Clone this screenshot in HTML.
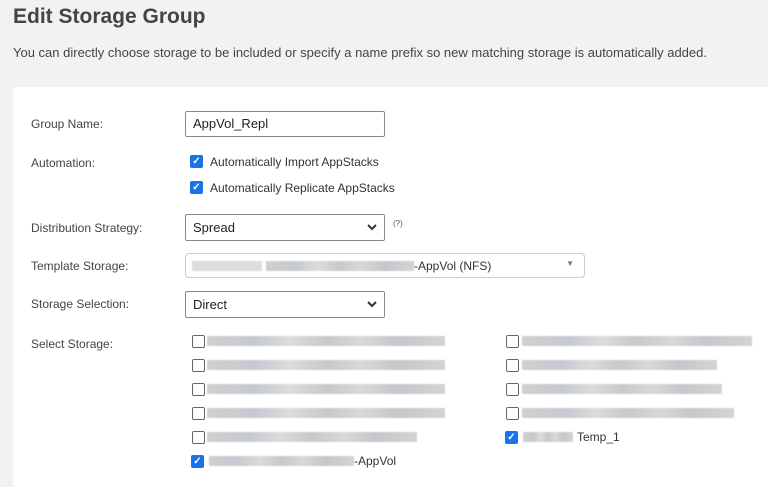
<!DOCTYPE html>
<html><head><style>
body{margin:0;width:768px;height:473px;background:#f2f2f2;font-family:"Liberation Sans",sans-serif;color:#333;overflow:hidden;position:relative}
.a{position:absolute}
h1{position:absolute;left:13px;top:5px;margin:0;font-size:21px;font-weight:bold;color:#444}
.card{position:absolute;left:13px;top:87px;width:770px;height:400px;background:#fff;border-radius:3px}
.lbl{position:absolute;left:31px;font-size:12px;color:#444}
.box{position:absolute;border:1px solid #8a8a8a;border-radius:2px;background:#fff;font-size:13px;color:#222;box-sizing:border-box;padding-left:7px}
.cb{position:absolute;width:11px;height:11px;border:1px solid #666;border-radius:2px;background:#fff}
.ck{position:absolute;width:13px;height:13px;border-radius:2px;background:#1a73e8;color:#fff;font-size:10px;line-height:13px;text-align:center;font-weight:bold}
.bl{position:absolute;height:10px;background:linear-gradient(90deg,#d0d0d0,#c5cad0 20%,#dcdcdc 35%,#c8c9cc 50%,#d8d8d8 65%,#c4c7cc 80%,#d4d4d4);filter:blur(0.5px)}
.t{position:absolute;font-size:12px;color:#333}
.chev{position:absolute;right:6px;top:5px}
</style></head><body>
<h1>Edit Storage Group</h1>
<div class="a" style="left:13px;top:45px;font-size:13px;color:#444">You can directly choose storage to be included or specify a name prefix so new matching storage is automatically added.</div>
<div class="card"></div>
<div class="lbl" style="top:117px">Group Name:</div>
<div class="box" style="left:185px;top:111px;width:200px;height:26px;line-height:24px">AppVol_Repl</div>
<div class="lbl" style="top:156px">Automation:</div>
<div class="ck" style="left:190px;top:155px">✓</div><div class="t" style="left:210px;top:155px">Automatically Import AppStacks</div>
<div class="ck" style="left:190px;top:181px">✓</div><div class="t" style="left:210px;top:181px">Automatically Replicate AppStacks</div>
<div class="lbl" style="top:221px">Distribution Strategy:</div>
<div class="box" style="left:185px;top:214px;width:200px;height:27px;line-height:25px">Spread<svg class="chev" width="12" height="14" viewBox="0 0 12 14"><path d="M2 5l4 4 4-4" stroke="#333" stroke-width="2" fill="none"/></svg></div>
<div class="a" style="left:393px;top:219px;font-size:8px;color:#557">(?)</div>
<div class="lbl" style="top:259px">Template Storage:</div>
<div class="box" style="left:185px;top:253px;width:400px;height:25px;border-color:#ccc;border-radius:4px">
<div class="bl" style="left:6px;top:7px;width:70px;background:#ddd"></div>
<div class="bl" style="left:80px;top:7px;width:148px"></div>
<div class="t" style="left:228px;top:5px;font-size:12px">-AppVol (NFS)</div>
<div class="a" style="right:10px;top:5px;font-size:8px;color:#777">▼</div></div>
<div class="lbl" style="top:297px">Storage Selection:</div>
<div class="box" style="left:185px;top:291px;width:200px;height:27px;line-height:25px">Direct<svg class="chev" width="12" height="14" viewBox="0 0 12 14"><path d="M2 5l4 4 4-4" stroke="#333" stroke-width="2" fill="none"/></svg></div>
<div class="lbl" style="top:337px">Select Storage:</div>
<div class="cb" style="left:192px;top:335px"></div><div class="bl" style="left:207px;top:336px;width:238px"></div>
<div class="cb" style="left:192px;top:359px"></div><div class="bl" style="left:207px;top:360px;width:238px"></div>
<div class="cb" style="left:192px;top:383px"></div><div class="bl" style="left:207px;top:384px;width:238px"></div>
<div class="cb" style="left:192px;top:407px"></div><div class="bl" style="left:207px;top:408px;width:238px"></div>
<div class="cb" style="left:192px;top:431px"></div><div class="bl" style="left:207px;top:432px;width:210px"></div>
<div class="ck" style="left:191px;top:455px">✓</div><div class="bl" style="left:209px;top:456px;width:145px"></div><div class="t" style="left:354px;top:454px">-AppVol</div>
<div class="cb" style="left:506px;top:335px"></div><div class="bl" style="left:522px;top:336px;width:230px"></div>
<div class="cb" style="left:506px;top:359px"></div><div class="bl" style="left:522px;top:360px;width:195px"></div>
<div class="cb" style="left:506px;top:383px"></div><div class="bl" style="left:522px;top:384px;width:200px"></div>
<div class="cb" style="left:506px;top:407px"></div><div class="bl" style="left:522px;top:408px;width:212px"></div>
<div class="ck" style="left:505px;top:431px">✓</div><div class="bl" style="left:523px;top:432px;width:50px"></div><div class="t" style="left:577px;top:430px">Temp_1</div>
</body></html>
